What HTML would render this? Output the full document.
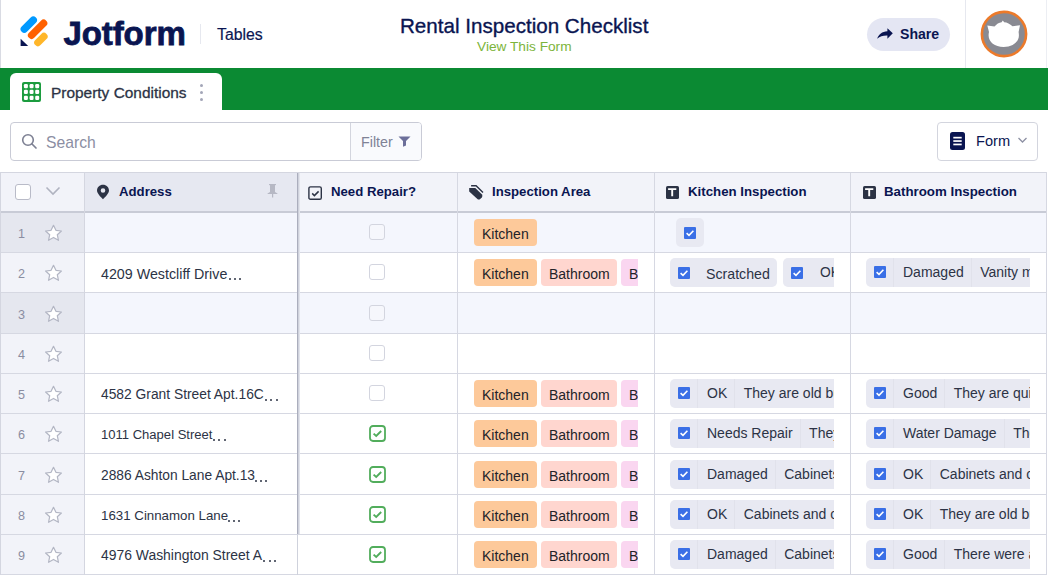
<!DOCTYPE html>
<html><head><meta charset="utf-8">
<style>
*{box-sizing:border-box;margin:0;padding:0}
html,body{width:1048px;height:575px;overflow:hidden;background:#fff;font-family:"Liberation Sans",sans-serif;color:#0a1551;position:relative}
.abs{position:absolute}
.t{position:absolute;white-space:nowrap;line-height:1}
</style></head><body>
<div class="abs" style="left:0;top:0;width:1px;height:68px;background:#d9dbe3"></div>
<svg class="abs" style="left:0;top:0" width="60" height="60" viewBox="0 0 60 60">
<line x1="24.3" y1="29.1" x2="33.3" y2="20.1" stroke="#0099ff" stroke-width="7.4" stroke-linecap="round"/>
<line x1="31.6" y1="35.25" x2="43.6" y2="23.25" stroke="#ff6100" stroke-width="7.4" stroke-linecap="round"/>
<line x1="37.9" y1="42.5" x2="43.9" y2="36.5" stroke="#ffb629" stroke-width="7.4" stroke-linecap="round"/>
<path d="M20.6 38.8 L20.6 46.1 L28.2 46.1 Z" fill="#0a1551"/>
</svg>
<div class="t" style="left:63.5px;top:17px;font-size:33.0px;font-weight:bold;color:#0a1551;-webkit-text-stroke:0.8px #0a1551;letter-spacing:-0.1px;">Jotform</div>
<div class="abs" style="left:200px;top:24px;width:1px;height:20px;background:#e6e8ef"></div>
<div class="t" style="left:217px;top:27px;font-size:15.8px;font-weight:normal;color:#0a1551;-webkit-text-stroke:0.2px #0a1551;">Tables</div>
<div class="t" style="left:400px;top:16px;font-size:20.6px;font-weight:normal;color:#0a1551;-webkit-text-stroke:0.35px #0a1551;">Rental Inspection Checklist</div>
<div class="t" style="left:477px;top:39.5px;font-size:13.7px;font-weight:normal;color:#7cb43a;">View This Form</div>
<div class="abs" style="left:867px;top:18px;width:83px;height:33px;border-radius:16.5px;background:#e4e6f3"></div>
<svg class="abs" style="left:876px;top:27px" width="18" height="13" viewBox="0 0 18 13"><path d="M1.2 11.7 C2.8 7.2 6 4.6 11.4 4.3 L11.4 1.3 L16.8 6.3 L11.4 11.7 L11.4 8.4 C7 8.3 4 9.2 1.2 11.7 Z" fill="#0a1551"/></svg>
<div class="t" style="left:900px;top:27px;font-size:14.1px;font-weight:bold;color:#0a1551;">Share</div>
<div class="abs" style="left:965px;top:0;width:1px;height:68px;background:#e6e8ef"></div>
<div class="abs" style="left:1046px;top:0;width:1px;height:68px;background:#eceef3"></div>
<svg class="abs" style="left:979px;top:9px" width="50" height="50" viewBox="0 0 50 50">
<circle cx="25" cy="25" r="22.1" fill="#898a92" stroke="#ec7a2a" stroke-width="2.6"/>
<path d="M8.3 16.6 L15.5 17.5 C17.5 15 20 13.6 22.6 13.2 L23.8 11.4 L25.2 13.2 C28 13.4 31 14.8 33.5 17.3 L41 16.2 L39.6 23 C39.8 24 39.9 25.5 39.9 26.5 C39.9 33 33.4 38 24.6 38 C15.8 38 9.6 33 9.6 26.5 C9.6 25.5 9.7 24 10 23 Z" fill="#fff"/>
</svg>
<div class="abs" style="left:0;top:68px;width:1048px;height:42px;background:#0b8a33"></div>
<div class="abs" style="left:10px;top:73px;width:212px;height:38px;background:#fff;border-radius:6px 6px 0 0"></div>
<svg class="abs" style="left:22px;top:82px" width="19" height="20" viewBox="0 0 19 20">
<rect x="0" y="0" width="19" height="20" rx="2" fill="#1c9c3f"/>
<rect x="1.90" y="2.00" width="4.0" height="4.2" rx="1.2" fill="#fff"/><rect x="7.55" y="2.00" width="4.0" height="4.2" rx="1.2" fill="#fff"/><rect x="13.20" y="2.00" width="4.0" height="4.2" rx="1.2" fill="#fff"/><rect x="1.90" y="7.85" width="4.0" height="4.2" rx="1.2" fill="#fff"/><rect x="7.55" y="7.85" width="4.0" height="4.2" rx="1.2" fill="#fff"/><rect x="13.20" y="7.85" width="4.0" height="4.2" rx="1.2" fill="#fff"/><rect x="1.90" y="13.70" width="4.0" height="4.2" rx="1.2" fill="#fff"/><rect x="7.55" y="13.70" width="4.0" height="4.2" rx="1.2" fill="#fff"/><rect x="13.20" y="13.70" width="4.0" height="4.2" rx="1.2" fill="#fff"/>
</svg>
<div class="t" style="left:51px;top:84.5px;font-size:15.45px;font-weight:normal;color:#2c3345;-webkit-text-stroke:0.3px #2c3345;">Property Conditions</div>
<div class="abs" style="left:200px;top:84px;width:3px;height:3px;border-radius:50%;background:#a3a6b8"></div>
<div class="abs" style="left:200px;top:91px;width:3px;height:3px;border-radius:50%;background:#a3a6b8"></div>
<div class="abs" style="left:200px;top:98px;width:3px;height:3px;border-radius:50%;background:#a3a6b8"></div>
<div class="abs" style="left:10px;top:122px;width:412px;height:39px;border:1px solid #c9cbd6;border-radius:4px;background:#fff"></div>
<div class="abs" style="left:350px;top:123px;width:71px;height:37px;background:#f9fafd;border-left:1px solid #d3d5de;border-radius:0 3px 3px 0"></div>
<svg class="abs" style="left:21px;top:133px" width="17" height="17" viewBox="0 0 17 17"><circle cx="7" cy="7" r="5.3" fill="none" stroke="#7d8093" stroke-width="1.6"/><line x1="11" y1="11" x2="15" y2="15" stroke="#7d8093" stroke-width="1.7" stroke-linecap="round"/></svg>
<div class="t" style="left:46px;top:135px;font-size:15.7px;font-weight:normal;color:#8b8ea3;">Search</div>
<div class="t" style="left:361px;top:135px;font-size:14.3px;font-weight:normal;color:#7f8296;">Filter</div>
<svg class="abs" style="left:398px;top:136px" width="13" height="11" viewBox="0 0 13 11"><path d="M0.5 0.5 H12.5 L8 5 V9.5 L5 10.8 V5 Z" fill="#6c6f9a"/></svg>
<div class="abs" style="left:937px;top:122px;width:101px;height:39px;border:1px solid #d3d5de;border-radius:4px;background:#fff"></div>
<svg class="abs" style="left:950px;top:132px" width="15" height="18" viewBox="0 0 15 18"><rect x="0" y="0" width="15" height="18" rx="2.5" fill="#0a1551"/><rect x="3.3" y="4.8" width="8.4" height="1.7" fill="#fff"/><rect x="3.3" y="8.2" width="8.4" height="1.7" fill="#fff"/><rect x="3.3" y="11.6" width="8.4" height="1.7" fill="#fff"/></svg>
<div class="t" style="left:976px;top:134px;font-size:14.6px;font-weight:normal;color:#0a1551;">Form</div>
<svg class="abs" style="left:1017px;top:136px" width="11" height="8" viewBox="0 0 11 8"><path d="M1.5 2 L5.5 6 L9.5 2" fill="none" stroke="#8d90a3" stroke-width="1.3"/></svg>
<div class="abs" style="left:0;top:172px;width:1047px;height:1px;background:#d4d6e0"></div>
<div class="abs" style="left:0;top:173px;width:1046px;height:38px;background:#f2f3f9"></div>
<div class="abs" style="left:85px;top:173px;width:212px;height:38px;background:#e6e8f1"></div>
<div class="abs" style="left:0;top:211px;width:1047px;height:2px;background:#c8cbd6"></div>
<div class="abs" style="left:85px;top:213px;width:961px;height:39px;background:#f4f6fd"></div>
<div class="abs" style="left:0;top:213px;width:85px;height:39px;background:#e5e7ef"></div>
<div class="abs" style="left:0;top:252px;width:1047px;height:1px;background:#d6d8e2"></div>
<div class="abs" style="left:85px;top:253px;width:961px;height:39px;background:#ffffff"></div>
<div class="abs" style="left:0;top:253px;width:85px;height:39px;background:#f2f3f9"></div>
<div class="abs" style="left:0;top:292px;width:1047px;height:1px;background:#d6d8e2"></div>
<div class="abs" style="left:85px;top:293px;width:961px;height:40px;background:#f4f6fd"></div>
<div class="abs" style="left:0;top:293px;width:85px;height:40px;background:#e5e7ef"></div>
<div class="abs" style="left:0;top:333px;width:1047px;height:1px;background:#d6d8e2"></div>
<div class="abs" style="left:85px;top:334px;width:961px;height:39px;background:#ffffff"></div>
<div class="abs" style="left:0;top:334px;width:85px;height:39px;background:#f2f3f9"></div>
<div class="abs" style="left:0;top:373px;width:1047px;height:1px;background:#d6d8e2"></div>
<div class="abs" style="left:85px;top:374px;width:961px;height:39px;background:#ffffff"></div>
<div class="abs" style="left:0;top:374px;width:85px;height:39px;background:#f2f3f9"></div>
<div class="abs" style="left:0;top:413px;width:1047px;height:1px;background:#d6d8e2"></div>
<div class="abs" style="left:85px;top:414px;width:961px;height:39px;background:#ffffff"></div>
<div class="abs" style="left:0;top:414px;width:85px;height:39px;background:#f2f3f9"></div>
<div class="abs" style="left:0;top:453px;width:1047px;height:1px;background:#d6d8e2"></div>
<div class="abs" style="left:85px;top:454px;width:961px;height:40px;background:#ffffff"></div>
<div class="abs" style="left:0;top:454px;width:85px;height:40px;background:#f2f3f9"></div>
<div class="abs" style="left:0;top:494px;width:1047px;height:1px;background:#d6d8e2"></div>
<div class="abs" style="left:85px;top:495px;width:961px;height:39px;background:#ffffff"></div>
<div class="abs" style="left:0;top:495px;width:85px;height:39px;background:#f2f3f9"></div>
<div class="abs" style="left:0;top:534px;width:1047px;height:1px;background:#d6d8e2"></div>
<div class="abs" style="left:85px;top:535px;width:961px;height:39px;background:#ffffff"></div>
<div class="abs" style="left:0;top:535px;width:85px;height:39px;background:#f2f3f9"></div>
<div class="abs" style="left:0;top:574px;width:1047px;height:1px;background:#d6d8e2"></div>
<div class="abs" style="left:0;top:172px;width:1px;height:403px;background:#d4d6e0"></div>
<div class="abs" style="left:84px;top:173px;width:1px;height:402px;background:#d4d6e0"></div>
<div class="abs" style="left:297px;top:173px;width:1px;height:402px;background:#cfd2dc"></div>
<div class="abs" style="left:297px;top:173px;width:1px;height:361px;background:#abaebd"></div><div class="abs" style="left:298px;top:173px;width:1px;height:361px;background:#cfd2dc"></div><div class="abs" style="left:299px;top:173px;width:1px;height:361px;background:#e2e4ec"></div>
<div class="abs" style="left:457px;top:173px;width:1px;height:402px;background:#d6d8e2"></div>
<div class="abs" style="left:654px;top:173px;width:1px;height:402px;background:#d6d8e2"></div>
<div class="abs" style="left:850px;top:173px;width:1px;height:402px;background:#d6d8e2"></div>
<div class="abs" style="left:1046px;top:172px;width:1px;height:403px;background:#d6d8e2"></div>
<div class="abs" style="left:15px;top:184px;width:16px;height:16px;border:1.5px solid #b9bbc8;border-radius:3px;background:#fff"></div>
<svg class="abs" style="left:45px;top:186px" width="16" height="10" viewBox="0 0 16 10"><path d="M1.5 1.5 L8 8 L14.5 1.5" fill="none" stroke="#b0b3c0" stroke-width="1.6"/></svg>
<svg class="abs" style="left:96px;top:184px" width="14" height="16" viewBox="0 0 14 16"><path d="M7 0.8 C3.6 0.8 1 3.4 1 6.6 C1 10.2 7 15.2 7 15.2 C7 15.2 13 10.2 13 6.6 C13 3.4 10.4 0.8 7 0.8 Z M7 4.2 A2.3 2.3 0 1 1 7 8.8 A2.3 2.3 0 1 1 7 4.2 Z" fill="#2c3345" fill-rule="evenodd"/></svg>
<div class="t" style="left:119px;top:185px;font-size:13.2px;font-weight:bold;color:#0a1551;">Address</div>
<svg class="abs" style="left:265px;top:183px" width="16" height="16" viewBox="0 0 16 16"><path d="M4 1 H11 V1.8 L10 2.6 V9 L12.5 10.5 V11 H2.5 V10.5 L5 9 V2.6 L4 1.8 Z" fill="#b6b8c4"/><rect x="7" y="11" width="1.2" height="3.5" fill="#b6b8c4"/></svg>
<svg class="abs" style="left:308px;top:185.5px" width="15" height="15" viewBox="0 0 15 15"><rect x="0.9" y="0.9" width="12.4" height="12.4" rx="1.6" fill="none" stroke="#2c3345" stroke-width="1.4"/><path d="M4.2 7.4 L6.4 9.6 L10.6 5.4" fill="none" stroke="#2c3345" stroke-width="1.5"/></svg>
<div class="t" style="left:331px;top:185px;font-size:13.2px;font-weight:bold;color:#0a1551;">Need Repair?</div>
<svg class="abs" style="left:467px;top:183px" width="18" height="18" viewBox="0 0 18 18"><path d="M2.2 4.9 H8.3 L15 11.6 Q16 13 14.8 14.4 L13.2 16 Q11.8 17.2 10.4 16 L2.2 8.4 Z" fill="#2c3345"/><path d="M4.1 2.7 H9.1 L16 9.6" fill="none" stroke="#2c3345" stroke-width="1.4"/></svg>
<div class="t" style="left:492px;top:185px;font-size:13.2px;font-weight:bold;color:#0a1551;">Inspection Area</div>
<svg class="abs" style="left:665.8px;top:185.8px" width="13" height="13" viewBox="0 0 13 13"><rect x="0" y="0" width="13" height="13" rx="1.6" fill="#2c3345"/><path d="M2.1 3.1 H10.3 M6.2 3.1 V10.3" stroke="#fff" stroke-width="1.9"/></svg>
<div class="t" style="left:688px;top:185px;font-size:13.25px;font-weight:bold;color:#0a1551;">Kitchen Inspection</div>
<svg class="abs" style="left:862.8px;top:185.8px" width="13" height="13" viewBox="0 0 13 13"><rect x="0" y="0" width="13" height="13" rx="1.6" fill="#2c3345"/><path d="M2.1 3.1 H10.3 M6.2 3.1 V10.3" stroke="#fff" stroke-width="1.9"/></svg>
<div class="t" style="left:884px;top:185px;font-size:13.3px;font-weight:bold;color:#0a1551;">Bathroom Inspection</div>
<div class="t" style="left:18px;top:228px;font-size:12.6px;font-weight:normal;color:#8a8da1;">1</div>
<svg class="abs" style="left:43.5px;top:223.5px" width="19" height="18" viewBox="0 0 18 17"><path d="M9 1.2 L11.3 6 L16.5 6.6 L12.6 10.1 L13.7 15.4 L9 12.7 L4.3 15.4 L5.4 10.1 L1.5 6.6 L6.7 6 Z" fill="#fff" stroke="#b3b6c4" stroke-width="1.15" stroke-linejoin="round"/></svg>
<div class="abs" style="left:369px;top:224px;width:16px;height:16px;border:1.5px solid #d3d5df;border-radius:3px;background:#f6f7fc"></div>
<div class="abs" style="left:474px;top:219px;width:164px;height:28px;overflow:hidden">
<div class="abs" style="left:0px;top:0;width:63px;height:27px;border-radius:4px;background:#fdc99a"></div>
<div class="t" style="left:8px;top:8px;font-size:14.0px;font-weight:normal;color:#232329;">Kitchen</div>
</div>
<div class="abs" style="left:676px;top:218px;width:28px;height:29px;border-radius:5px;background:#e8e9f2"></div>
<svg class="abs" style="left:684px;top:227px" width="12" height="12" viewBox="0 0 12 12"><rect width="12" height="12" rx="1" fill="#3a6fe6"/><path d="M2.6 6.2 L5 8.4 L9.4 3.8" fill="none" stroke="#fff" stroke-width="1.6"/></svg>
<div class="t" style="left:18px;top:268px;font-size:12.6px;font-weight:normal;color:#8a8da1;">2</div>
<svg class="abs" style="left:43.5px;top:263.5px" width="19" height="18" viewBox="0 0 18 17"><path d="M9 1.2 L11.3 6 L16.5 6.6 L12.6 10.1 L13.7 15.4 L9 12.7 L4.3 15.4 L5.4 10.1 L1.5 6.6 L6.7 6 Z" fill="#fff" stroke="#b3b6c4" stroke-width="1.15" stroke-linejoin="round"/></svg>
<div class="t" style="left:101px;top:267px;font-size:14.27px;font-weight:normal;color:#2c3345;">4209 Westcliff Drive</div>
<div class="abs" style="left:228.7px;top:278px;width:2px;height:2px;border-radius:1px;background:#2c3345"></div>
<div class="abs" style="left:233.9px;top:278px;width:2px;height:2px;border-radius:1px;background:#2c3345"></div>
<div class="abs" style="left:239.1px;top:278px;width:2px;height:2px;border-radius:1px;background:#2c3345"></div>
<div class="abs" style="left:369px;top:264px;width:16px;height:16px;border:1.5px solid #d3d5df;border-radius:3px;background:#fff"></div>
<div class="abs" style="left:474px;top:259px;width:164px;height:28px;overflow:hidden">
<div class="abs" style="left:0px;top:0;width:63px;height:27px;border-radius:4px;background:#fdc99a"></div>
<div class="t" style="left:8px;top:8px;font-size:14.0px;font-weight:normal;color:#232329;">Kitchen</div>
<div class="abs" style="left:67px;top:0;width:76px;height:27px;border-radius:4px;background:#ffd6cf"></div>
<div class="t" style="left:75px;top:8px;font-size:14.0px;font-weight:normal;color:#232329;">Bathroom</div>
<div class="abs" style="left:147px;top:0;width:40px;height:27px;border-radius:4px;background:#fad6f0"></div>
<div class="t" style="left:155px;top:8px;font-size:14.0px;font-weight:normal;color:#232329;">B</div>
</div>
<div class="abs" style="left:670px;top:258px;width:164px;height:29px;overflow:hidden">
<div class="abs" style="left:0;top:0;width:107px;height:29px;border-radius:5px;background:#e8e9f2"></div>
<svg class="abs" style="left:8px;top:8.6px" width="12" height="12" viewBox="0 0 12 12"><rect width="12" height="12" rx="1" fill="#3a6fe6"/><path d="M2.6 6.2 L5 8.4 L9.4 3.8" fill="none" stroke="#fff" stroke-width="1.6"/></svg>
<div class="t" style="left:36px;top:8.5px;font-size:14.2px;font-weight:normal;color:#2c3345;">Scratched</div>
<div class="abs" style="left:113px;top:0;width:80px;height:29px;border-radius:5px;background:#e8e9f2"></div>
<svg class="abs" style="left:121px;top:8.6px" width="12" height="12" viewBox="0 0 12 12"><rect width="12" height="12" rx="1" fill="#3a6fe6"/><path d="M2.6 6.2 L5 8.4 L9.4 3.8" fill="none" stroke="#fff" stroke-width="1.6"/></svg>
<div class="t" style="left:150px;top:8px;font-size:13.8px;font-weight:normal;color:#2c3345;">OK</div>
</div>
<div class="abs" style="left:866px;top:258px;width:164px;height:29px;overflow:hidden">
<div class="abs" style="left:0;top:0;width:260px;height:29px;border-radius:5px;background:#e8e9f2"></div>
<div class="abs" style="left:27px;top:0;width:1px;height:29px;background:#e1e2eb"></div>
<svg class="abs" style="left:8px;top:8px" width="12" height="12" viewBox="0 0 12 12"><rect width="12" height="12" rx="1" fill="#3a6fe6"/><path d="M2.6 6.2 L5 8.4 L9.4 3.8" fill="none" stroke="#fff" stroke-width="1.6"/></svg>
<div class="t" style="left:28px;top:0;height:29px;line-height:29px;font-size:14px;color:#2c3345"><span style="display:inline-block;padding:0 7px 0 9px;border-right:1px solid #e1e2eb;height:29px">Damaged</span><span style="display:inline-block;padding:0 8px 0 8.5px">Vanity m</span></div>
</div>
<div class="t" style="left:18px;top:309px;font-size:12.6px;font-weight:normal;color:#8a8da1;">3</div>
<svg class="abs" style="left:43.5px;top:304.5px" width="19" height="18" viewBox="0 0 18 17"><path d="M9 1.2 L11.3 6 L16.5 6.6 L12.6 10.1 L13.7 15.4 L9 12.7 L4.3 15.4 L5.4 10.1 L1.5 6.6 L6.7 6 Z" fill="#fff" stroke="#b3b6c4" stroke-width="1.15" stroke-linejoin="round"/></svg>
<div class="abs" style="left:369px;top:305px;width:16px;height:16px;border:1.5px solid #d3d5df;border-radius:3px;background:#f6f7fc"></div>
<div class="t" style="left:18px;top:349px;font-size:12.6px;font-weight:normal;color:#8a8da1;">4</div>
<svg class="abs" style="left:43.5px;top:344.5px" width="19" height="18" viewBox="0 0 18 17"><path d="M9 1.2 L11.3 6 L16.5 6.6 L12.6 10.1 L13.7 15.4 L9 12.7 L4.3 15.4 L5.4 10.1 L1.5 6.6 L6.7 6 Z" fill="#fff" stroke="#b3b6c4" stroke-width="1.15" stroke-linejoin="round"/></svg>
<div class="abs" style="left:369px;top:345px;width:16px;height:16px;border:1.5px solid #d3d5df;border-radius:3px;background:#fff"></div>
<div class="t" style="left:18px;top:389px;font-size:12.6px;font-weight:normal;color:#8a8da1;">5</div>
<svg class="abs" style="left:43.5px;top:384.5px" width="19" height="18" viewBox="0 0 18 17"><path d="M9 1.2 L11.3 6 L16.5 6.6 L12.6 10.1 L13.7 15.4 L9 12.7 L4.3 15.4 L5.4 10.1 L1.5 6.6 L6.7 6 Z" fill="#fff" stroke="#b3b6c4" stroke-width="1.15" stroke-linejoin="round"/></svg>
<div class="t" style="left:101px;top:388px;font-size:13.82px;font-weight:normal;color:#2c3345;">4582 Grant Street Apt.16C</div>
<div class="abs" style="left:265.2px;top:399px;width:2px;height:2px;border-radius:1px;background:#2c3345"></div>
<div class="abs" style="left:270.4px;top:399px;width:2px;height:2px;border-radius:1px;background:#2c3345"></div>
<div class="abs" style="left:275.6px;top:399px;width:2px;height:2px;border-radius:1px;background:#2c3345"></div>
<div class="abs" style="left:369px;top:385px;width:16px;height:16px;border:1.5px solid #d3d5df;border-radius:3px;background:#fff"></div>
<div class="abs" style="left:474px;top:380px;width:164px;height:28px;overflow:hidden">
<div class="abs" style="left:0px;top:0;width:63px;height:27px;border-radius:4px;background:#fdc99a"></div>
<div class="t" style="left:8px;top:8px;font-size:14.0px;font-weight:normal;color:#232329;">Kitchen</div>
<div class="abs" style="left:67px;top:0;width:76px;height:27px;border-radius:4px;background:#ffd6cf"></div>
<div class="t" style="left:75px;top:8px;font-size:14.0px;font-weight:normal;color:#232329;">Bathroom</div>
<div class="abs" style="left:147px;top:0;width:40px;height:27px;border-radius:4px;background:#fad6f0"></div>
<div class="t" style="left:155px;top:8px;font-size:14.0px;font-weight:normal;color:#232329;">B</div>
</div>
<div class="abs" style="left:670px;top:379px;width:164px;height:29px;overflow:hidden">
<div class="abs" style="left:0;top:0;width:260px;height:29px;border-radius:5px;background:#e8e9f2"></div>
<div class="abs" style="left:27px;top:0;width:1px;height:29px;background:#e1e2eb"></div>
<svg class="abs" style="left:8px;top:8px" width="12" height="12" viewBox="0 0 12 12"><rect width="12" height="12" rx="1" fill="#3a6fe6"/><path d="M2.6 6.2 L5 8.4 L9.4 3.8" fill="none" stroke="#fff" stroke-width="1.6"/></svg>
<div class="t" style="left:28px;top:0;height:29px;line-height:29px;font-size:14px;color:#2c3345"><span style="display:inline-block;padding:0 7px 0 9px;border-right:1px solid #e1e2eb;height:29px">OK</span><span style="display:inline-block;padding:0 8px 0 8.5px">They are old bu</span></div>
</div>
<div class="abs" style="left:866px;top:379px;width:164px;height:29px;overflow:hidden">
<div class="abs" style="left:0;top:0;width:260px;height:29px;border-radius:5px;background:#e8e9f2"></div>
<div class="abs" style="left:27px;top:0;width:1px;height:29px;background:#e1e2eb"></div>
<svg class="abs" style="left:8px;top:8px" width="12" height="12" viewBox="0 0 12 12"><rect width="12" height="12" rx="1" fill="#3a6fe6"/><path d="M2.6 6.2 L5 8.4 L9.4 3.8" fill="none" stroke="#fff" stroke-width="1.6"/></svg>
<div class="t" style="left:28px;top:0;height:29px;line-height:29px;font-size:14px;color:#2c3345"><span style="display:inline-block;padding:0 7px 0 9px;border-right:1px solid #e1e2eb;height:29px">Good</span><span style="display:inline-block;padding:0 8px 0 8.5px">They are qui</span></div>
</div>
<div class="t" style="left:18px;top:429px;font-size:12.6px;font-weight:normal;color:#8a8da1;">6</div>
<svg class="abs" style="left:43.5px;top:424.5px" width="19" height="18" viewBox="0 0 18 17"><path d="M9 1.2 L11.3 6 L16.5 6.6 L12.6 10.1 L13.7 15.4 L9 12.7 L4.3 15.4 L5.4 10.1 L1.5 6.6 L6.7 6 Z" fill="#fff" stroke="#b3b6c4" stroke-width="1.15" stroke-linejoin="round"/></svg>
<div class="t" style="left:101px;top:428px;font-size:13.05px;font-weight:normal;color:#2c3345;">1011 Chapel Street</div>
<div class="abs" style="left:213.2px;top:439px;width:2px;height:2px;border-radius:1px;background:#2c3345"></div>
<div class="abs" style="left:218.4px;top:439px;width:2px;height:2px;border-radius:1px;background:#2c3345"></div>
<div class="abs" style="left:223.6px;top:439px;width:2px;height:2px;border-radius:1px;background:#2c3345"></div>
<svg class="abs" style="left:369px;top:425px" width="17" height="17" viewBox="0 0 17 17"><rect x="1" y="1" width="15" height="15" rx="3" fill="#fff" stroke="#52ad5c" stroke-width="1.8"/><path d="M4.6 8.6 L7.2 11 L12.2 6" fill="none" stroke="#52ad5c" stroke-width="1.9"/></svg>
<div class="abs" style="left:474px;top:420px;width:164px;height:28px;overflow:hidden">
<div class="abs" style="left:0px;top:0;width:63px;height:27px;border-radius:4px;background:#fdc99a"></div>
<div class="t" style="left:8px;top:8px;font-size:14.0px;font-weight:normal;color:#232329;">Kitchen</div>
<div class="abs" style="left:67px;top:0;width:76px;height:27px;border-radius:4px;background:#ffd6cf"></div>
<div class="t" style="left:75px;top:8px;font-size:14.0px;font-weight:normal;color:#232329;">Bathroom</div>
<div class="abs" style="left:147px;top:0;width:40px;height:27px;border-radius:4px;background:#fad6f0"></div>
<div class="t" style="left:155px;top:8px;font-size:14.0px;font-weight:normal;color:#232329;">B</div>
</div>
<div class="abs" style="left:670px;top:419px;width:164px;height:29px;overflow:hidden">
<div class="abs" style="left:0;top:0;width:260px;height:29px;border-radius:5px;background:#e8e9f2"></div>
<div class="abs" style="left:27px;top:0;width:1px;height:29px;background:#e1e2eb"></div>
<svg class="abs" style="left:8px;top:8px" width="12" height="12" viewBox="0 0 12 12"><rect width="12" height="12" rx="1" fill="#3a6fe6"/><path d="M2.6 6.2 L5 8.4 L9.4 3.8" fill="none" stroke="#fff" stroke-width="1.6"/></svg>
<div class="t" style="left:28px;top:0;height:29px;line-height:29px;font-size:14px;color:#2c3345"><span style="display:inline-block;padding:0 7px 0 9px;border-right:1px solid #e1e2eb;height:29px">Needs Repair</span><span style="display:inline-block;padding:0 8px 0 8.5px">They</span></div>
</div>
<div class="abs" style="left:866px;top:419px;width:164px;height:29px;overflow:hidden">
<div class="abs" style="left:0;top:0;width:260px;height:29px;border-radius:5px;background:#e8e9f2"></div>
<div class="abs" style="left:27px;top:0;width:1px;height:29px;background:#e1e2eb"></div>
<svg class="abs" style="left:8px;top:8px" width="12" height="12" viewBox="0 0 12 12"><rect width="12" height="12" rx="1" fill="#3a6fe6"/><path d="M2.6 6.2 L5 8.4 L9.4 3.8" fill="none" stroke="#fff" stroke-width="1.6"/></svg>
<div class="t" style="left:28px;top:0;height:29px;line-height:29px;font-size:14px;color:#2c3345"><span style="display:inline-block;padding:0 7px 0 9px;border-right:1px solid #e1e2eb;height:29px">Water Damage</span><span style="display:inline-block;padding:0 8px 0 8.5px">The</span></div>
</div>
<div class="t" style="left:18px;top:470px;font-size:12.6px;font-weight:normal;color:#8a8da1;">7</div>
<svg class="abs" style="left:43.5px;top:465.5px" width="19" height="18" viewBox="0 0 18 17"><path d="M9 1.2 L11.3 6 L16.5 6.6 L12.6 10.1 L13.7 15.4 L9 12.7 L4.3 15.4 L5.4 10.1 L1.5 6.6 L6.7 6 Z" fill="#fff" stroke="#b3b6c4" stroke-width="1.15" stroke-linejoin="round"/></svg>
<div class="t" style="left:101px;top:469px;font-size:13.79px;font-weight:normal;color:#2c3345;">2886 Ashton Lane Apt.13</div>
<div class="abs" style="left:255.0px;top:480px;width:2px;height:2px;border-radius:1px;background:#2c3345"></div>
<div class="abs" style="left:260.2px;top:480px;width:2px;height:2px;border-radius:1px;background:#2c3345"></div>
<div class="abs" style="left:265.4px;top:480px;width:2px;height:2px;border-radius:1px;background:#2c3345"></div>
<svg class="abs" style="left:369px;top:466px" width="17" height="17" viewBox="0 0 17 17"><rect x="1" y="1" width="15" height="15" rx="3" fill="#fff" stroke="#52ad5c" stroke-width="1.8"/><path d="M4.6 8.6 L7.2 11 L12.2 6" fill="none" stroke="#52ad5c" stroke-width="1.9"/></svg>
<div class="abs" style="left:474px;top:461px;width:164px;height:28px;overflow:hidden">
<div class="abs" style="left:0px;top:0;width:63px;height:27px;border-radius:4px;background:#fdc99a"></div>
<div class="t" style="left:8px;top:8px;font-size:14.0px;font-weight:normal;color:#232329;">Kitchen</div>
<div class="abs" style="left:67px;top:0;width:76px;height:27px;border-radius:4px;background:#ffd6cf"></div>
<div class="t" style="left:75px;top:8px;font-size:14.0px;font-weight:normal;color:#232329;">Bathroom</div>
<div class="abs" style="left:147px;top:0;width:40px;height:27px;border-radius:4px;background:#fad6f0"></div>
<div class="t" style="left:155px;top:8px;font-size:14.0px;font-weight:normal;color:#232329;">B</div>
</div>
<div class="abs" style="left:670px;top:460px;width:164px;height:29px;overflow:hidden">
<div class="abs" style="left:0;top:0;width:260px;height:29px;border-radius:5px;background:#e8e9f2"></div>
<div class="abs" style="left:27px;top:0;width:1px;height:29px;background:#e1e2eb"></div>
<svg class="abs" style="left:8px;top:8px" width="12" height="12" viewBox="0 0 12 12"><rect width="12" height="12" rx="1" fill="#3a6fe6"/><path d="M2.6 6.2 L5 8.4 L9.4 3.8" fill="none" stroke="#fff" stroke-width="1.6"/></svg>
<div class="t" style="left:28px;top:0;height:29px;line-height:29px;font-size:14px;color:#2c3345"><span style="display:inline-block;padding:0 7px 0 9px;border-right:1px solid #e1e2eb;height:29px">Damaged</span><span style="display:inline-block;padding:0 8px 0 8.5px">Cabinets</span></div>
</div>
<div class="abs" style="left:866px;top:460px;width:164px;height:29px;overflow:hidden">
<div class="abs" style="left:0;top:0;width:260px;height:29px;border-radius:5px;background:#e8e9f2"></div>
<div class="abs" style="left:27px;top:0;width:1px;height:29px;background:#e1e2eb"></div>
<svg class="abs" style="left:8px;top:8px" width="12" height="12" viewBox="0 0 12 12"><rect width="12" height="12" rx="1" fill="#3a6fe6"/><path d="M2.6 6.2 L5 8.4 L9.4 3.8" fill="none" stroke="#fff" stroke-width="1.6"/></svg>
<div class="t" style="left:28px;top:0;height:29px;line-height:29px;font-size:14px;color:#2c3345"><span style="display:inline-block;padding:0 7px 0 9px;border-right:1px solid #e1e2eb;height:29px">OK</span><span style="display:inline-block;padding:0 8px 0 8.5px">Cabinets and c</span></div>
</div>
<div class="t" style="left:18px;top:510px;font-size:12.6px;font-weight:normal;color:#8a8da1;">8</div>
<svg class="abs" style="left:43.5px;top:505.5px" width="19" height="18" viewBox="0 0 18 17"><path d="M9 1.2 L11.3 6 L16.5 6.6 L12.6 10.1 L13.7 15.4 L9 12.7 L4.3 15.4 L5.4 10.1 L1.5 6.6 L6.7 6 Z" fill="#fff" stroke="#b3b6c4" stroke-width="1.15" stroke-linejoin="round"/></svg>
<div class="t" style="left:101px;top:509px;font-size:13.31px;font-weight:normal;color:#2c3345;">1631 Cinnamon Lane</div>
<div class="abs" style="left:227.8px;top:520px;width:2px;height:2px;border-radius:1px;background:#2c3345"></div>
<div class="abs" style="left:233.0px;top:520px;width:2px;height:2px;border-radius:1px;background:#2c3345"></div>
<div class="abs" style="left:238.2px;top:520px;width:2px;height:2px;border-radius:1px;background:#2c3345"></div>
<svg class="abs" style="left:369px;top:506px" width="17" height="17" viewBox="0 0 17 17"><rect x="1" y="1" width="15" height="15" rx="3" fill="#fff" stroke="#52ad5c" stroke-width="1.8"/><path d="M4.6 8.6 L7.2 11 L12.2 6" fill="none" stroke="#52ad5c" stroke-width="1.9"/></svg>
<div class="abs" style="left:474px;top:501px;width:164px;height:28px;overflow:hidden">
<div class="abs" style="left:0px;top:0;width:63px;height:27px;border-radius:4px;background:#fdc99a"></div>
<div class="t" style="left:8px;top:8px;font-size:14.0px;font-weight:normal;color:#232329;">Kitchen</div>
<div class="abs" style="left:67px;top:0;width:76px;height:27px;border-radius:4px;background:#ffd6cf"></div>
<div class="t" style="left:75px;top:8px;font-size:14.0px;font-weight:normal;color:#232329;">Bathroom</div>
<div class="abs" style="left:147px;top:0;width:40px;height:27px;border-radius:4px;background:#fad6f0"></div>
<div class="t" style="left:155px;top:8px;font-size:14.0px;font-weight:normal;color:#232329;">B</div>
</div>
<div class="abs" style="left:670px;top:500px;width:164px;height:29px;overflow:hidden">
<div class="abs" style="left:0;top:0;width:260px;height:29px;border-radius:5px;background:#e8e9f2"></div>
<div class="abs" style="left:27px;top:0;width:1px;height:29px;background:#e1e2eb"></div>
<svg class="abs" style="left:8px;top:8px" width="12" height="12" viewBox="0 0 12 12"><rect width="12" height="12" rx="1" fill="#3a6fe6"/><path d="M2.6 6.2 L5 8.4 L9.4 3.8" fill="none" stroke="#fff" stroke-width="1.6"/></svg>
<div class="t" style="left:28px;top:0;height:29px;line-height:29px;font-size:14px;color:#2c3345"><span style="display:inline-block;padding:0 7px 0 9px;border-right:1px solid #e1e2eb;height:29px">OK</span><span style="display:inline-block;padding:0 8px 0 8.5px">Cabinets and c</span></div>
</div>
<div class="abs" style="left:866px;top:500px;width:164px;height:29px;overflow:hidden">
<div class="abs" style="left:0;top:0;width:260px;height:29px;border-radius:5px;background:#e8e9f2"></div>
<div class="abs" style="left:27px;top:0;width:1px;height:29px;background:#e1e2eb"></div>
<svg class="abs" style="left:8px;top:8px" width="12" height="12" viewBox="0 0 12 12"><rect width="12" height="12" rx="1" fill="#3a6fe6"/><path d="M2.6 6.2 L5 8.4 L9.4 3.8" fill="none" stroke="#fff" stroke-width="1.6"/></svg>
<div class="t" style="left:28px;top:0;height:29px;line-height:29px;font-size:14px;color:#2c3345"><span style="display:inline-block;padding:0 7px 0 9px;border-right:1px solid #e1e2eb;height:29px">OK</span><span style="display:inline-block;padding:0 8px 0 8.5px">They are old bu</span></div>
</div>
<div class="t" style="left:18px;top:550px;font-size:12.6px;font-weight:normal;color:#8a8da1;">9</div>
<svg class="abs" style="left:43.5px;top:545.5px" width="19" height="18" viewBox="0 0 18 17"><path d="M9 1.2 L11.3 6 L16.5 6.6 L12.6 10.1 L13.7 15.4 L9 12.7 L4.3 15.4 L5.4 10.1 L1.5 6.6 L6.7 6 Z" fill="#fff" stroke="#b3b6c4" stroke-width="1.15" stroke-linejoin="round"/></svg>
<div class="t" style="left:101px;top:549px;font-size:13.91px;font-weight:normal;color:#2c3345;">4976 Washington Street A</div>
<div class="abs" style="left:263.3px;top:560px;width:2px;height:2px;border-radius:1px;background:#2c3345"></div>
<div class="abs" style="left:268.5px;top:560px;width:2px;height:2px;border-radius:1px;background:#2c3345"></div>
<div class="abs" style="left:273.7px;top:560px;width:2px;height:2px;border-radius:1px;background:#2c3345"></div>
<svg class="abs" style="left:369px;top:546px" width="17" height="17" viewBox="0 0 17 17"><rect x="1" y="1" width="15" height="15" rx="3" fill="#fff" stroke="#52ad5c" stroke-width="1.8"/><path d="M4.6 8.6 L7.2 11 L12.2 6" fill="none" stroke="#52ad5c" stroke-width="1.9"/></svg>
<div class="abs" style="left:474px;top:541px;width:164px;height:28px;overflow:hidden">
<div class="abs" style="left:0px;top:0;width:63px;height:27px;border-radius:4px;background:#fdc99a"></div>
<div class="t" style="left:8px;top:8px;font-size:14.0px;font-weight:normal;color:#232329;">Kitchen</div>
<div class="abs" style="left:67px;top:0;width:76px;height:27px;border-radius:4px;background:#ffd6cf"></div>
<div class="t" style="left:75px;top:8px;font-size:14.0px;font-weight:normal;color:#232329;">Bathroom</div>
<div class="abs" style="left:147px;top:0;width:40px;height:27px;border-radius:4px;background:#fad6f0"></div>
<div class="t" style="left:155px;top:8px;font-size:14.0px;font-weight:normal;color:#232329;">B</div>
</div>
<div class="abs" style="left:670px;top:540px;width:164px;height:29px;overflow:hidden">
<div class="abs" style="left:0;top:0;width:260px;height:29px;border-radius:5px;background:#e8e9f2"></div>
<div class="abs" style="left:27px;top:0;width:1px;height:29px;background:#e1e2eb"></div>
<svg class="abs" style="left:8px;top:8px" width="12" height="12" viewBox="0 0 12 12"><rect width="12" height="12" rx="1" fill="#3a6fe6"/><path d="M2.6 6.2 L5 8.4 L9.4 3.8" fill="none" stroke="#fff" stroke-width="1.6"/></svg>
<div class="t" style="left:28px;top:0;height:29px;line-height:29px;font-size:14px;color:#2c3345"><span style="display:inline-block;padding:0 7px 0 9px;border-right:1px solid #e1e2eb;height:29px">Damaged</span><span style="display:inline-block;padding:0 8px 0 8.5px">Cabinets</span></div>
</div>
<div class="abs" style="left:866px;top:540px;width:164px;height:29px;overflow:hidden">
<div class="abs" style="left:0;top:0;width:260px;height:29px;border-radius:5px;background:#e8e9f2"></div>
<div class="abs" style="left:27px;top:0;width:1px;height:29px;background:#e1e2eb"></div>
<svg class="abs" style="left:8px;top:8px" width="12" height="12" viewBox="0 0 12 12"><rect width="12" height="12" rx="1" fill="#3a6fe6"/><path d="M2.6 6.2 L5 8.4 L9.4 3.8" fill="none" stroke="#fff" stroke-width="1.6"/></svg>
<div class="t" style="left:28px;top:0;height:29px;line-height:29px;font-size:14px;color:#2c3345"><span style="display:inline-block;padding:0 7px 0 9px;border-right:1px solid #e1e2eb;height:29px">Good</span><span style="display:inline-block;padding:0 8px 0 8.5px">There were a</span></div>
</div>
</body></html>
